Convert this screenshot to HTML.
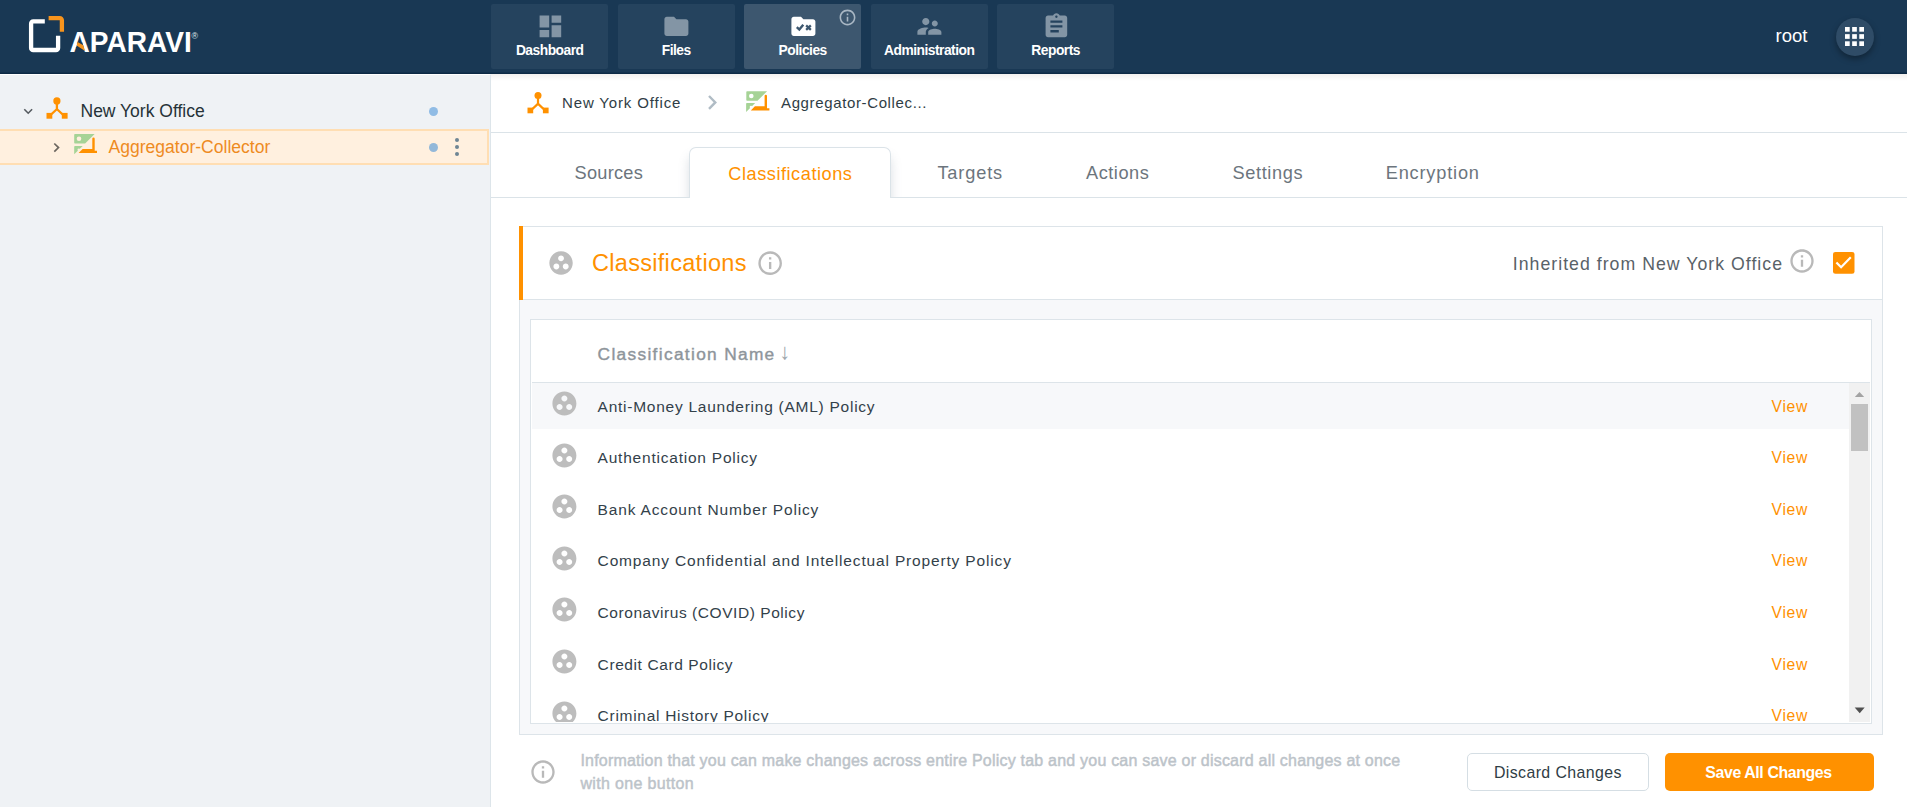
<!DOCTYPE html>
<html lang="en">
<head>
<meta charset="utf-8">
<title>Aparavi - Policies</title>
<style>
*{box-sizing:border-box;margin:0;padding:0}
html,body{width:1907px;height:807px;overflow:hidden;background:#fff}
body{font-family:"Liberation Sans",sans-serif;color:#263238;position:relative}
.t{position:absolute;white-space:nowrap}
.a{position:absolute}
svg{position:absolute;overflow:visible}
#hdr{position:absolute;left:0;top:0;width:1907px;height:74px;background:linear-gradient(#193854 0,#193854 71.5px,#0d2a45 73.5px,#0d2a45 74px);z-index:5}
.nav{position:absolute;top:4px;height:65px;width:117px;background:#25435e;border-radius:2px}
.nav.act{background:#3d576f}
#apps{position:absolute;left:1836px;top:17.5px;width:38px;height:38px;border-radius:50%;background:#2f4c67;box-shadow:0 3px 6px rgba(0,0,0,.35)}
#side{position:absolute;left:0;top:74px;width:491px;height:733px;background:#eff2f5;border-right:1px solid #dde5ea;border-top:1px solid #fff}
#mshadow{position:absolute;left:491px;top:74px;width:1416px;height:7px;background:linear-gradient(rgba(60,30,10,.07),rgba(60,30,10,0))}
#selrow{position:absolute;left:0;top:129px;width:489px;height:36px;background:#fff0df;border:2px solid #ffdeb3;border-left:none}
.dot{position:absolute;width:9px;height:9px;border-radius:50%;background:#90bce5}
.kd{position:absolute;width:4.4px;height:4.4px;border-radius:50%;background:#6e8594}
.hl{position:absolute;height:1px;background:#dbe3e8}

</style>
</head>
<body>
<!-- header -->
<div id="hdr">
<svg style="left:0;top:0" width="220" height="73" viewBox="0 0 220 73">
<path d="M44.8 21.4H33.2a2.1 2.1 0 0 0-2.1 2.1v24.4a2.1 2.1 0 0 0 2.1 2.100h22.800a2.1 2.1 0 0 0 2.100-2.100V35.700" fill="none" stroke="#fff" stroke-width="4.300"/>
<path d="M48.600 18.100h11.200a2.100 2.100 0 0 1 2.100 2.100v11.500" fill="none" stroke="#f7941d" stroke-width="4.300"/>
<text x="69.600" y="51.900" font-family="Liberation Sans, sans-serif" font-weight="bold" font-size="28.600" fill="#fff" textLength="122.200" lengthAdjust="spacingAndGlyphs">APARAVI</text>
<path d="M75.800 48h8.200l-1.700-5.600h-4.400z" fill="#193854"/>
<path d="M77.600 42l5.600 3.300 1.900 5.800-8.500-5.700z" fill="#f7941d"/>
<text x="191.600" y="39.300" font-family="Liberation Sans, sans-serif" font-size="8.800" fill="#dfe5ea">®</text>
</svg>
<div class="nav" style="left:491px"></div>
<svg style="left:535.60px;top:11.600px" width="28.8" height="28.8" viewBox="0 0 24 24"><path d="M3 13h8V3H3v10zm0 8h8v-6H3v6zm10 0h8V11h-8v10zm0-18v6h8V3h-8z" fill="#8395a5"/></svg>
<div class="t" style="left:491.2px;width:117px;text-align:center;top:41px;font-size:13.8px;line-height:19px;color:#fff;font-weight:bold;letter-spacing:-0.5px;">Dashboard</div>
<div class="nav" style="left:617.5px"></div>
<svg style="left:661.60px;top:11.600px" width="28.8" height="28.8" viewBox="0 0 24 24"><path d="M10 4H4c-1.100 0-1.990.9-1.990 2L2 18c0 1.100.9 2 2 2h16c1.100 0 2-.9 2-2V8c0-1.100-.9-2-2-2h-8l-2-2z" fill="#8395a5"/></svg>
<div class="t" style="left:617.7px;width:117px;text-align:center;top:41px;font-size:13.8px;line-height:19px;color:#fff;font-weight:bold;letter-spacing:-0.5px;">Files</div>
<div class="nav act" style="left:744px"></div>
<svg style="left:788.60px;top:11.600px" width="28.8" height="28.8" viewBox="0 0 24 24"><path d="M10 4H4c-1.100 0-1.990.9-1.990 2L2 18c0 1.100.9 2 2 2h16c1.100 0 2-.9 2-2V8c0-1.100-.9-2-2-2h-8l-2-2z" fill="#fff"/><path d="M6.500 12.600l2.100 2 3.300-4" fill="none" stroke="#3d576f" stroke-width="2"/><path d="M14.300 11.200l3.900 3.700m0-3.700l-3.900 3.700" fill="none" stroke="#3d576f" stroke-width="1.900"/></svg>
<div class="t" style="left:744.2px;width:117px;text-align:center;top:41px;font-size:13.8px;line-height:19px;color:#fff;font-weight:bold;letter-spacing:-0.5px;">Policies</div>
<div class="nav" style="left:870.5px"></div>
<svg style="left:914.60px;top:11.600px" width="28.8" height="28.8" viewBox="0 0 24 24"><path d="M16.500 12c1.380 0 2.490-1.120 2.490-2.500S17.880 7 16.500 7C15.120 7 14 8.120 14 9.500s1.120 2.500 2.500 2.500zM9 11c1.660 0 2.990-1.340 2.990-3S10.660 5 9 5C7.340 5 6 6.340 6 8s1.340 3 3 3zm7.500 3c-1.830 0-5.500.920-5.500 2.750V19h11v-2.250c0-1.830-3.670-2.750-5.500-2.750zM9 13c-2.330 0-7 1.170-7 3.500V19h7v-2.250c0-.850.330-2.340 2.370-3.470C10.500 13.100 9.660 13 9 13z" fill="#8395a5"/></svg>
<div class="t" style="left:870.7px;width:117px;text-align:center;top:41px;font-size:13.8px;line-height:19px;color:#fff;font-weight:bold;letter-spacing:-0.5px;">Administration</div>
<div class="nav" style="left:997px"></div>
<svg style="left:1041.60px;top:11.600px" width="28.8" height="28.8" viewBox="0 0 24 24"><path d="M19 3h-4.180C14.400 1.840 13.300 1 12 1c-1.300 0-2.400.840-2.820 2H5c-1.100 0-2 .9-2 2v14c0 1.100.9 2 2 2h14c1.100 0 2-.9 2-2V5c0-1.100-.9-2-2-2zm-7 0c.550 0 1 .450 1 1s-.450 1-1 1-1-.450-1-1 .450-1 1-1zm2 14H7v-2h7v2zm3-4H7v-2h10v2zm0-4H7V7h10v2z" fill="#8395a5"/></svg>
<div class="t" style="left:997.2px;width:117px;text-align:center;top:41px;font-size:13.8px;line-height:19px;color:#fff;font-weight:bold;letter-spacing:-0.5px;">Reports</div>
<svg style="left:837.80px;top:8.00px" width="19" height="19" viewBox="0 0 24 24"><path d="M11 17h2v-6h-2v6zm1-15C6.480 2 2 6.480 2 12s4.480 10 10 10 10-4.480 10-10S17.520 2 12 2zm0 18c-4.410 0-8-3.590-8-8s3.590-8 8-8 8 3.590 8 8-3.590 8-8 8zM11 9h2V7h-2v2z" fill="#a9b7c4"/></svg>
<div class="t" style="left:1775.6px;top:23px;font-size:18.5px;line-height:25px;color:#fff;">root</div>
<div id="apps"></div>
<svg style="left:1845.300px;top:27px" width="19" height="19" viewBox="0 0 18.600 18.600"><rect x="0" y="0" width="4.600" height="4.600" fill="#fff"/><rect x="7" y="0" width="4.600" height="4.600" fill="#fff"/><rect x="14" y="0" width="4.600" height="4.600" fill="#fff"/><rect x="0" y="7" width="4.600" height="4.600" fill="#fff"/><rect x="7" y="7" width="4.600" height="4.600" fill="#fff"/><rect x="14" y="7" width="4.600" height="4.600" fill="#fff"/><rect x="0" y="14" width="4.600" height="4.600" fill="#fff"/><rect x="7" y="14" width="4.600" height="4.600" fill="#fff"/><rect x="14" y="14" width="4.600" height="4.600" fill="#fff"/></svg>
</div>
<!-- sidebar -->
<div id="side"></div>
<div id="mshadow"></div>
<div id="selrow"></div>
<svg style="left:0;top:0" width="491" height="200" viewBox="0 0 491 200"><path d="M24.300 109.300l3.900 3.900 3.900-3.900" fill="none" stroke="#555b60" stroke-width="1.600"/><g fill="#ff9100" stroke="none"><circle cx="56.900" cy="100.900" r="3.600"/><rect x="46.500" y="112.900" width="5.800" height="5.800"/><rect x="61.800" y="112.900" width="5.800" height="5.800"/></g><path d="M56.900 102v7.300M57 109l-7 6.500M56.800 109l7 6.500" fill="none" stroke="#ff9100" stroke-width="2.300"/><path d="M54.300 143.500l4.200 4.100-4.200 4.100" fill="none" stroke="#6b665f" stroke-width="1.700"/><g id="aggicon"><path d="M75 134h19.600l-9.500 9.500H75a.8.8 0 0 1-.8-.8v-7.900a.8.800 0 0 1 .8-.8z" fill="#a6d396"/><circle cx="79" cy="138.800" r="2.300" fill="#fff0df"/><path d="M75 146h7.700l-8.500 8.200v-7.400a.8.800 0 0 1 .8-.8z" fill="#a6d396"/><circle cx="78.800" cy="149.700" r="1.300" fill="#fff0df"/><path d="M82.600 149h9.700v-10.300a1.200 1.200 0 0 1 2.400 0V150.800h2.300v2.200H78.600z" fill="#ff9100"/></g></svg>
<div class="t" style="left:80.5px;top:99px;font-size:17.5px;line-height:24px;color:#263238;">New York Office</div>
<div class="t" style="left:108.5px;top:135px;font-size:17.55px;line-height:24px;color:#ee8b1f;">Aggregator-Collector</div>
<div class="dot" style="left:429px;top:106.500px"></div>
<div class="dot" style="left:429px;top:142.500px;background:#93b8d9"></div>
<div class="kd" style="left:454.600px;top:137.8px"></div>
<div class="kd" style="left:454.600px;top:144.8px"></div>
<div class="kd" style="left:454.600px;top:151.8px"></div>
<!-- main_top -->
<div class="hl" style="left:491px;top:132px;width:1416px"></div>
<div class="hl" style="left:491px;top:197px;width:1416px"></div>
<div class="a" style="left:660px;top:146px;width:260px;height:51px;overflow:hidden"><div class="a" style="left:29px;top:1px;width:202px;height:60px;background:#fff;border:1px solid #dbe3e8;border-bottom:none;border-radius:7px 7px 0 0;box-shadow:0 9px 11px rgba(90,110,130,.22)"></div></div>
<div class="a" style="left:690px;top:197px;width:200px;height:1px;background:#fff"></div>
<svg style="left:491px;top:73px" width="500" height="60" viewBox="491 73 500 60"><g fill="#ff9100"><circle cx="538" cy="95.400" r="3.500"/><rect x="527.500" y="107.600" width="5.700" height="5.700"/><rect x="542.900" y="107.600" width="5.700" height="5.700"/></g><path d="M538 97v7M538.100 103.600l-7 6.700M537.900 103.600l7 6.700" fill="none" stroke="#ff9100" stroke-width="2.200"/><path d="M709 96l6.300 6.400-6.300 6.400" fill="none" stroke="#b0bcc5" stroke-width="2.400"/><g transform="translate(0.5,0)"><path d="M746.600 91.200h20l-9.600 9.600h-10.400a.8.800 0 0 1-.8-.8v-8a.8.800 0 0 1 .8-.8z" fill="#a6d396"/><circle cx="750.800" cy="96" r="2.300" fill="#fff"/><path d="M746.400 103h8.300l-9.100 9v-8.200a.8.800 0 0 1 .8-.8z" fill="#a6d396"/><circle cx="750.500" cy="107" r="1.300" fill="#fff"/><path d="M754.400 106.300h9.700v-10.300a1.200 1.200 0 0 1 2.400 0v12.200h2.400v2.200h-18.600z" fill="#ff9100"/></g></svg>
<div class="t" style="left:562.0px;top:92px;font-size:15px;line-height:21px;color:#2f3d45;letter-spacing:0.854px;">New York Office</div>
<div class="t" style="left:781.0px;top:92px;font-size:15px;line-height:21px;color:#2f3d45;letter-spacing:0.632px;">Aggregator-Collec...</div>
<div class="t" style="left:574.6px;top:161px;font-size:18.2px;line-height:24px;color:#6c757d;letter-spacing:0.239px;">Sources</div>
<div class="t" style="left:728.3px;top:162px;font-size:18.2px;line-height:24px;color:#ff9100;letter-spacing:0.527px;">Classifications</div>
<div class="t" style="left:937.4px;top:161px;font-size:18.2px;line-height:24px;color:#6c757d;letter-spacing:0.853px;">Targets</div>
<div class="t" style="left:1086.0px;top:161px;font-size:18.2px;line-height:24px;color:#6c757d;letter-spacing:0.519px;">Actions</div>
<div class="t" style="left:1232.6px;top:161px;font-size:18.2px;line-height:24px;color:#6c757d;letter-spacing:0.605px;">Settings</div>
<div class="t" style="left:1385.7px;top:161px;font-size:18.2px;line-height:24px;color:#6c757d;letter-spacing:0.812px;">Encryption</div>
<!-- section -->
<div class="a" style="left:519px;top:226px;width:1364px;height:509px;background:#f7f8fa;border:1px solid #dde4e9"></div>
<div class="a" style="left:519px;top:226px;width:1364px;height:74px;background:#fff;border:1px solid #dde4e9;border-left:none"></div>
<div class="a" style="left:519px;top:226px;width:4px;height:74px;background:#ff9100"></div>
<svg style="left:546.96px;top:248.86px" width="28.08" height="28.08" viewBox="0 0 24 24"><path d="M12 2C6.480 2 2 6.480 2 12s4.480 10 10 10 10-4.480 10-10S17.520 2 12 2zM8 17.500c-1.380 0-2.500-1.120-2.500-2.500s1.120-2.500 2.500-2.500 2.500 1.120 2.500 2.500-1.120 2.500-2.500 2.500zM9.500 8c0-1.380 1.120-2.500 2.500-2.500s2.500 1.120 2.500 2.500-1.120 2.500-2.500 2.500S9.500 9.380 9.500 8zm6.500 9.500c-1.380 0-2.500-1.120-2.500-2.500s1.120-2.500 2.500-2.500 2.500 1.120 2.500 2.500-1.120 2.500-2.500 2.500z" fill="#bdbdbd"/></svg>
<div class="t" style="left:592.0px;top:248px;font-size:23.5px;line-height:30px;color:#ff9100;letter-spacing:0.3px;">Classifications</div>
<svg style="left:756.35px;top:248.75px" width="28.3" height="28.3" viewBox="0 0 24 24"><path d="M11 17h2v-6h-2v6zm1-15C6.480 2 2 6.480 2 12s4.480 10 10 10 10-4.480 10-10S17.520 2 12 2zm0 18c-4.410 0-8-3.590-8-8s3.590-8 8-8 8 3.590 8 8-3.590 8-8 8zM11 9h2V7h-2v2z" fill="#b9b9b9"/></svg>
<div class="t" style="left:1512.8px;top:252px;font-size:17.7px;line-height:24px;color:#596268;letter-spacing:1.023px;">Inherited from New York Office</div>
<svg style="left:1788.00px;top:246.90px" width="28" height="28" viewBox="0 0 24 24"><path d="M11 17h2v-6h-2v6zm1-15C6.480 2 2 6.480 2 12s4.480 10 10 10 10-4.480 10-10S17.520 2 12 2zm0 18c-4.410 0-8-3.590-8-8s3.590-8 8-8 8 3.590 8 8-3.590 8-8 8zM11 9h2V7h-2v2z" fill="#b9b9b9"/></svg>
<svg style="left:1833.300px;top:252px" width="21.500" height="21.700" viewBox="0 0 21.500 21.700"><rect x="0" y="0" width="21.500" height="21.700" rx="2.500" fill="#ff9100"/><path d="M3.400 10.400l4.700 4.900 9.700-10" fill="none" stroke="#fff" stroke-width="2.200"/></svg>
<div class="a" style="left:530px;top:319px;width:1342px;height:405px;background:#fff;border:1px solid #dde4e9"></div>
<div class="hl" style="left:532px;top:382px;width:1338px;background:#dde4e9"></div>
<div class="t" style="left:597.6px;top:342px;font-size:17.3px;line-height:24px;color:#8e959b;letter-spacing:1.329px;-webkit-text-stroke:0.4px #8e959b;">Classification Name</div>
<div class="t" style="left:779.2px;top:337px;font-size:22px;line-height:29px;color:#a0a7ad;">↓</div>
<div class="a" style="left:531px;top:383px;width:1318px;height:339px;overflow:hidden">
<div class="a" style="left:1px;top:0;width:1317px;height:45.600px;background:#f7f8fa"></div>
<svg style="left:18.90px;top:6.00px" width="28.80" height="28.80" viewBox="0 0 24 24"><path d="M12 2C6.480 2 2 6.480 2 12s4.480 10 10 10 10-4.480 10-10S17.520 2 12 2zM8 17.500c-1.380 0-2.500-1.120-2.500-2.500s1.120-2.500 2.500-2.500 2.500 1.120 2.500 2.500-1.120 2.500-2.500 2.500zM9.500 8c0-1.380 1.120-2.500 2.500-2.500s2.500 1.120 2.500 2.500-1.120 2.500-2.500 2.500S9.500 9.380 9.500 8zm6.500 9.500c-1.380 0-2.500-1.120-2.500-2.500s1.120-2.500 2.500-2.500 2.500 1.120 2.500 2.500-1.120 2.500-2.500 2.500z" fill="#bdbdbd"/></svg>
<div class="t" style="left:66.6px;top:13px;font-size:15.5px;line-height:21px;color:#33414a;letter-spacing:0.745px;">Anti-Money Laundering (AML) Policy</div>
<div class="t" style="left:1240.6px;top:13px;font-size:15.7px;line-height:21px;color:#ff9100;letter-spacing:0.651px;">View</div>
<svg style="left:18.90px;top:57.60px" width="28.80" height="28.80" viewBox="0 0 24 24"><path d="M12 2C6.480 2 2 6.480 2 12s4.480 10 10 10 10-4.480 10-10S17.520 2 12 2zM8 17.500c-1.380 0-2.500-1.120-2.500-2.500s1.120-2.500 2.500-2.500 2.500 1.120 2.500 2.500-1.120 2.500-2.500 2.500zM9.500 8c0-1.380 1.120-2.500 2.500-2.500s2.500 1.120 2.500 2.500-1.120 2.500-2.500 2.500S9.500 9.380 9.500 8zm6.500 9.500c-1.380 0-2.500-1.120-2.500-2.500s1.120-2.500 2.500-2.500 2.500 1.120 2.500 2.500-1.120 2.500-2.500 2.500z" fill="#bdbdbd"/></svg>
<div class="t" style="left:66.6px;top:64px;font-size:15.5px;line-height:21px;color:#33414a;letter-spacing:0.78px;">Authentication Policy</div>
<div class="t" style="left:1240.6px;top:64px;font-size:15.7px;line-height:21px;color:#ff9100;letter-spacing:0.651px;">View</div>
<svg style="left:18.90px;top:109.20px" width="28.80" height="28.80" viewBox="0 0 24 24"><path d="M12 2C6.480 2 2 6.480 2 12s4.480 10 10 10 10-4.480 10-10S17.520 2 12 2zM8 17.500c-1.380 0-2.500-1.120-2.500-2.500s1.120-2.500 2.500-2.500 2.500 1.120 2.500 2.500-1.120 2.500-2.500 2.500zM9.500 8c0-1.380 1.120-2.500 2.500-2.500s2.500 1.120 2.500 2.500-1.120 2.500-2.500 2.500S9.500 9.380 9.500 8zm6.500 9.500c-1.380 0-2.500-1.120-2.500-2.500s1.120-2.500 2.500-2.500 2.500 1.120 2.500 2.500-1.120 2.500-2.500 2.500z" fill="#bdbdbd"/></svg>
<div class="t" style="left:66.6px;top:116px;font-size:15.5px;line-height:21px;color:#33414a;letter-spacing:0.833px;">Bank Account Number Policy</div>
<div class="t" style="left:1240.6px;top:116px;font-size:15.7px;line-height:21px;color:#ff9100;letter-spacing:0.651px;">View</div>
<svg style="left:18.90px;top:160.80px" width="28.80" height="28.80" viewBox="0 0 24 24"><path d="M12 2C6.480 2 2 6.480 2 12s4.480 10 10 10 10-4.480 10-10S17.520 2 12 2zM8 17.500c-1.380 0-2.500-1.120-2.500-2.500s1.120-2.500 2.500-2.500 2.500 1.120 2.500 2.500-1.120 2.500-2.500 2.500zM9.500 8c0-1.380 1.120-2.500 2.500-2.500s2.500 1.120 2.500 2.500-1.120 2.500-2.500 2.500S9.500 9.380 9.500 8zm6.500 9.500c-1.380 0-2.500-1.120-2.500-2.500s1.120-2.500 2.500-2.500 2.500 1.120 2.500 2.500-1.120 2.500-2.500 2.500z" fill="#bdbdbd"/></svg>
<div class="t" style="left:66.6px;top:167px;font-size:15.5px;line-height:21px;color:#33414a;letter-spacing:0.84px;">Company Confidential and Intellectual Property Policy</div>
<div class="t" style="left:1240.6px;top:167px;font-size:15.7px;line-height:21px;color:#ff9100;letter-spacing:0.651px;">View</div>
<svg style="left:18.90px;top:212.40px" width="28.80" height="28.80" viewBox="0 0 24 24"><path d="M12 2C6.480 2 2 6.480 2 12s4.480 10 10 10 10-4.480 10-10S17.520 2 12 2zM8 17.500c-1.380 0-2.500-1.120-2.500-2.500s1.120-2.500 2.500-2.500 2.500 1.120 2.500 2.500-1.120 2.500-2.500 2.500zM9.500 8c0-1.380 1.120-2.500 2.500-2.500s2.500 1.120 2.500 2.500-1.120 2.500-2.500 2.500S9.500 9.380 9.500 8zm6.500 9.500c-1.380 0-2.500-1.120-2.500-2.500s1.120-2.500 2.500-2.500 2.500 1.120 2.500 2.500-1.120 2.500-2.500 2.500z" fill="#bdbdbd"/></svg>
<div class="t" style="left:66.6px;top:219px;font-size:15.5px;line-height:21px;color:#33414a;letter-spacing:0.555px;">Coronavirus (COVID) Policy</div>
<div class="t" style="left:1240.6px;top:219px;font-size:15.7px;line-height:21px;color:#ff9100;letter-spacing:0.651px;">View</div>
<svg style="left:18.90px;top:264.00px" width="28.80" height="28.80" viewBox="0 0 24 24"><path d="M12 2C6.480 2 2 6.480 2 12s4.480 10 10 10 10-4.480 10-10S17.520 2 12 2zM8 17.500c-1.380 0-2.500-1.120-2.500-2.500s1.120-2.500 2.500-2.500 2.500 1.120 2.500 2.500-1.120 2.500-2.500 2.500zM9.500 8c0-1.380 1.120-2.500 2.500-2.500s2.500 1.120 2.500 2.500-1.120 2.500-2.500 2.500S9.500 9.380 9.500 8zm6.500 9.500c-1.380 0-2.500-1.120-2.500-2.500s1.120-2.500 2.500-2.500 2.500 1.120 2.500 2.500-1.120 2.500-2.500 2.500z" fill="#bdbdbd"/></svg>
<div class="t" style="left:66.6px;top:271px;font-size:15.5px;line-height:21px;color:#33414a;letter-spacing:0.594px;">Credit Card Policy</div>
<div class="t" style="left:1240.6px;top:271px;font-size:15.7px;line-height:21px;color:#ff9100;letter-spacing:0.651px;">View</div>
<svg style="left:18.90px;top:315.60px" width="28.80" height="28.80" viewBox="0 0 24 24"><path d="M12 2C6.480 2 2 6.480 2 12s4.480 10 10 10 10-4.480 10-10S17.520 2 12 2zM8 17.500c-1.380 0-2.500-1.120-2.500-2.500s1.120-2.500 2.500-2.500 2.500 1.120 2.500 2.500-1.120 2.500-2.500 2.500zM9.500 8c0-1.380 1.120-2.500 2.500-2.500s2.500 1.120 2.500 2.500-1.120 2.500-2.500 2.500S9.500 9.380 9.500 8zm6.500 9.500c-1.380 0-2.500-1.120-2.500-2.500s1.120-2.500 2.500-2.500 2.500 1.120 2.500 2.500-1.120 2.500-2.500 2.500z" fill="#bdbdbd"/></svg>
<div class="t" style="left:66.6px;top:322px;font-size:15.5px;line-height:21px;color:#33414a;letter-spacing:0.717px;">Criminal History Policy</div>
<div class="t" style="left:1240.6px;top:322px;font-size:15.7px;line-height:21px;color:#ff9100;letter-spacing:0.651px;">View</div>
</div>
<div class="a" style="left:1849px;top:383px;width:21px;height:339px;background:#f1f1f1"></div>
<div class="a" style="left:1851px;top:404px;width:17px;height:47px;background:#c1c1c1"></div>
<svg style="left:1849px;top:383px" width="21" height="340" viewBox="0 0 21 340"><path d="M5.800 14l4.700-5.100 4.700 5.100z" fill="#a3a3a3"/><path d="M5.700 324.400l5 5.800 5-5.800z" fill="#505050"/></svg>
<!-- footer -->
<svg style="left:529px;top:758px" width="28" height="28" viewBox="0 0 24 24"><path d="M11 17h2v-6h-2v6zm1-15C6.480 2 2 6.480 2 12s4.480 10 10 10 10-4.480 10-10S17.520 2 12 2zm0 18c-4.410 0-8-3.590-8-8s3.590-8 8-8 8 3.590 8 8-3.590 8-8 8zM11 9h2V7h-2v2z" fill="#b9b9b9"/></svg>
<div class="t" style="left:580.4px;top:750px;font-size:16px;line-height:21px;color:#bcc3c9;letter-spacing:0.21px;-webkit-text-stroke:0.45px #bcc3c9;">Information that you can make changes across entire Policy tab and you can save or discard all changes at once</div>
<div class="t" style="left:580.4px;top:773px;font-size:16px;line-height:21px;color:#bcc3c9;letter-spacing:0.341px;-webkit-text-stroke:0.45px #bcc3c9;">with one button</div>
<div class="a" style="left:1467px;top:753px;width:182px;height:38px;background:#fff;border:1px solid #d5dee4;border-radius:5px"></div>
<div class="t" style="left:1494.0px;top:762px;font-size:15.9px;line-height:21px;color:#2f3d45;letter-spacing:0.389px;">Discard Changes</div>
<div class="a" style="left:1665px;top:753px;width:209px;height:38px;background:#ff9100;border-radius:5px"></div>
<div class="t" style="left:1705.3px;top:762px;font-size:15.9px;line-height:21px;color:#fff;font-weight:bold;letter-spacing:-0.396px;">Save All Changes</div>
</body>
</html>
